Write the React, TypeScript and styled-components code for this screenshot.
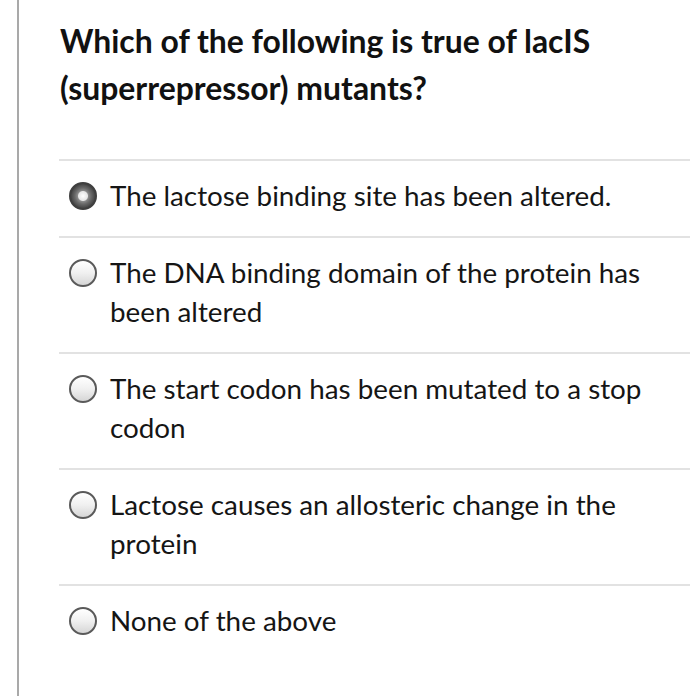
import React from "react";
import styled, { createGlobalStyle } from "styled-components";

const Global = createGlobalStyle`
  html, body { margin: 0; padding: 0; background: #fff; }
  body { font-family: Lato, "Open Sans", sans-serif; color: #111; }
`;

const Page = styled.div`
  display: flex;
  height: 696px;
  overflow: hidden;
`;

const Rail = styled.div`
  width: 17px;
  flex: none;
  border-right: 2px solid #a9a9a9;
`;

const Content = styled.div`
  flex: 1;
  padding: 18px 4px 0 40px;
`;

const Title = styled.h1`
  margin: 0 0 47px 1px;
  font-size: 31.9px;
  font-weight: 700;
  line-height: 47px;
  color: #111;
`;

const List = styled.div`
  display: flex;
  flex-direction: column;
`;

const Row = styled.label`
  display: flex;
  align-items: flex-start;
  gap: 13px;
  padding: 15px 0 21px 10px;
  border-top: 2px solid #e2e2e2;
  font-size: 27.8px;
  line-height: 39px;
  color: #151515;
`;

const Radio = styled.span<{ $checked?: boolean }>`
  flex: none;
  box-sizing: border-box;
  width: 28px;
  height: 28px;
  margin-top: 6px;
  border-radius: 50%;
  border: 2px solid ${(p) => (p.$checked ? "#3f3f3f" : "#5a5a5a")};
  background: ${(p) =>
    p.$checked
      ? "radial-gradient(circle at 50% 50%, #ffffff 0, #e6e6e6 4.5px, #8a8a8a 5.5px, #6a6a6a 8px, #454545 12px)"
      : "linear-gradient(180deg, #ffffff 0%, #f0f0f0 50%, #d6d6d6 100%)"};
`;

const Text = styled.span`
  flex: 1;
  padding-right: 20px;
`;

const options = [
  "The lactose binding site has been altered.",
  "The DNA binding domain of the protein has been altered",
  "The start codon has been mutated to a stop codon",
  "Lactose causes an allosteric change in the protein",
  "None of the above",
];

export default function App() {
  return (
    <Page>
      <Global />
      <Rail />
      <Content>
        <Title>
          Which of the following is true of lacIS
          <br />
          (superrepressor) mutants?
        </Title>
        <List>
          {options.map((o, i) => (
            <Row key={i}>
              <Radio $checked={i === 0} />
              <Text>{o}</Text>
            </Row>
          ))}
        </List>
      </Content>
    </Page>
  );
}
